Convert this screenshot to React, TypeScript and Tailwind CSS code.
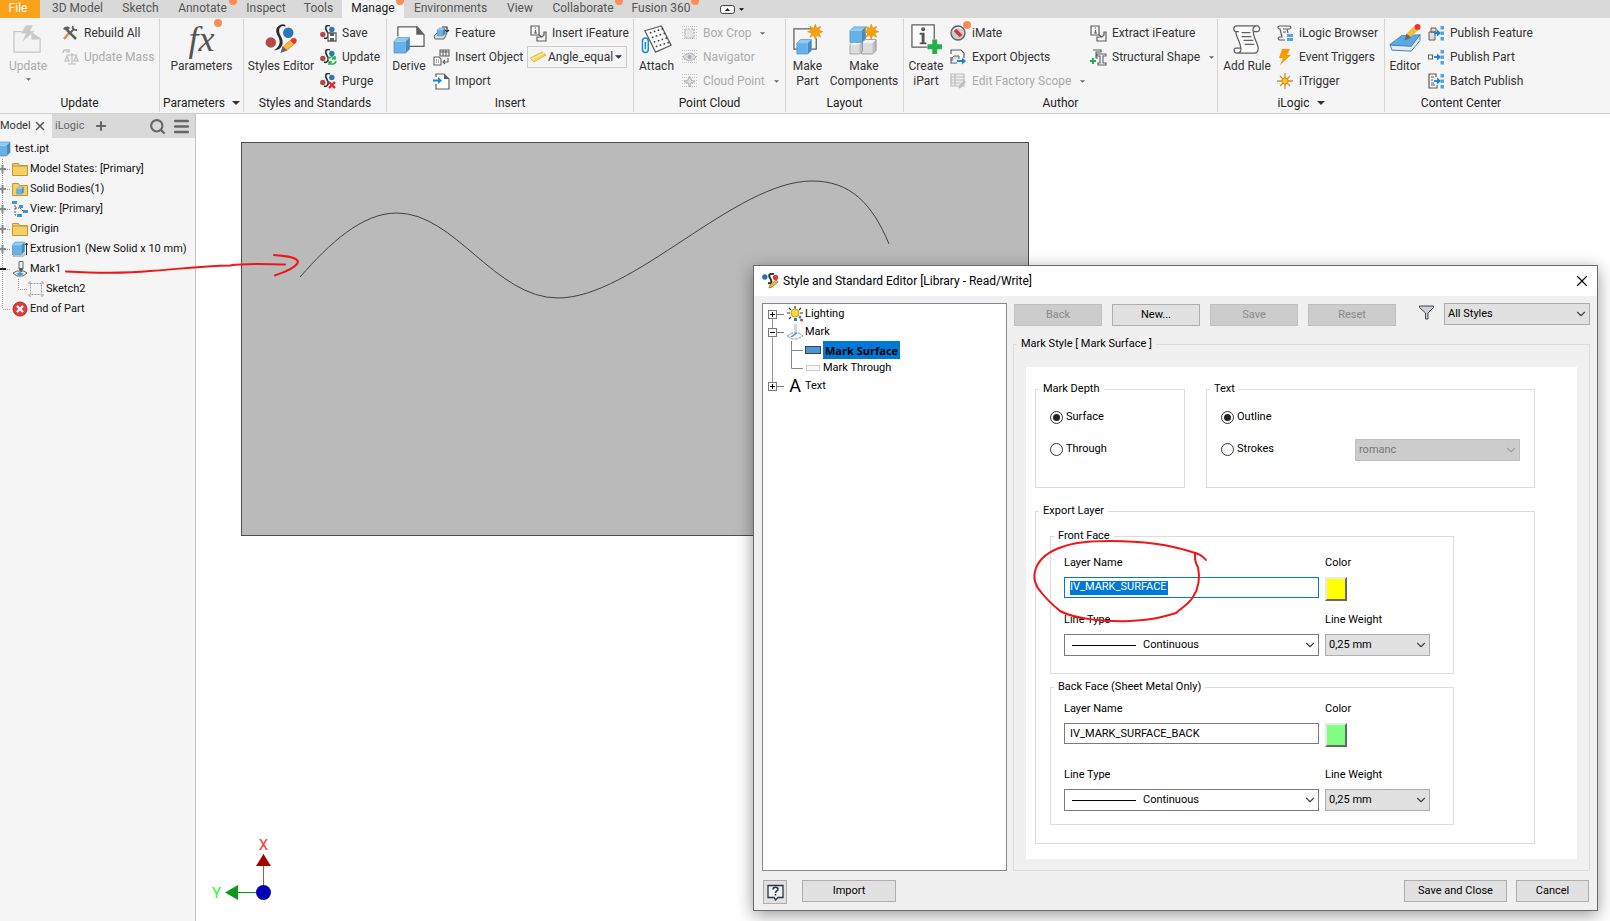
import React, { useState } from 'react';
import clsx from 'clsx';
import { ChevronDown, Menu, Plus, Search, X } from 'lucide-react';

const INK = '#5f5f5f';

function Caret({ className }: { className?: string }) {
  return (
    <svg viewBox="0 0 8 4" className={clsx('shrink-0', className)}>
      <path d="M0 0h8L4 4z" fill="currentColor" />
    </svg>
  );
}

function Cube({ x = 0, y = 0, s = 16, gray = false }: { x?: number; y?: number; s?: number; gray?: boolean }) {
  return (
    <g transform={`translate(${x} ${y}) scale(${s / 16})`}>
      <path d="M0 4h12v12H0z" fill={gray ? '#dcdcdc' : '#66b1e8'} />
      <path d="M0 4 4 0h12l-4 4z" fill={gray ? '#f4f4f4' : '#8ccbf7'} />
      <path d="M12 4 16 0v12l-4 4z" fill={gray ? '#bdbdbd' : '#4389c2'} />
      <path d="M0 4 4 0h12v12l-4 4H0z" fill="none" stroke={gray ? '#777' : '#4a90c8'} strokeWidth=".7" />
    </g>
  );
}

function Burst({ x, y, s = 1 }: { x: number; y: number; s?: number }) {
  return (
    <path
      transform={`translate(${x} ${y}) scale(${s})`}
      d="M0-8 1.5-3.7 5.7-5.7 3.7-1.5 8 0 3.7 1.5 5.7 5.7 1.5 3.7 0 8-1.5 3.7-5.7 5.7-3.7 1.5-8 0-3.7-1.5-5.7-5.7-1.5-3.7z"
      fill="#f7a10a"
      stroke="#d98500"
      strokeWidth=".5"
    />
  );
}

function Pencil() {
  return (
    <g>
      <path d="m17 30 2-6 9-8 4 4-9 8z" fill="#f6b93b" stroke="#c98a1b" strokeWidth=".6" />
      <path d="m16 31 2-7 5 4z" fill="#666" />
      <path d="m26 18 2-2c3-2 6 1 4 4l-2 2z" fill="#ee2f35" />
    </g>
  );
}

// shared "S with two balls" mark, 16x16
function StylesMark() {
  return (
    <g>
      <path d="M10 .8C7-.2 5 1.500 6 4.500c1 3 3 4 2 6.500-.5 2-2 3-4 2" fill="none" stroke="#333" strokeWidth="1.700" />
      <circle cx="2.800" cy="9.500" r="2.700" fill="#b84848" />
      <circle cx="11.800" cy="4.500" r="2.700" fill="#2a78b8" />
    </g>
  );
}

const bigIcons: Record<string, React.ReactNode> = {
  update: (
    <g>
      <path d="M2 9h16l11 7v14H2z" fill="#f3f3f3" stroke="#c6c6c6" strokeWidth="1.300" />
      <path d="M20 9v8h9z" fill="#c9c9c9" />
      <path d="M14 2h8l-3 6h5L10 20l4-9H9z" fill="#c9c9c9" stroke="#f5f5f5" strokeWidth=".6" />
    </g>
  ),
  styles: (
    <g>
      <path d="M21 2c-1.500-.8-3.500-1-5.500 0-5 2.500-4.500 7-2.500 11 2.500 4.500 3 8 .5 11.500-1.500 2-3.500 3-4.500 3.500 4 .5 7-1.500 8.500-4.500 1.500-3.500.5-7-1.500-10.500C14 8.500 14 5 17 3.500c1-.6 2.500-.6 4 .3z" fill="#2d2d2d" />
      <circle cx="6" cy="20" r="5.400" fill="#b84848" />
      <circle cx="24" cy="10" r="5.400" fill="#2a78b8" />
      <Pencil />
    </g>
  ),
  derive: (
    <g>
      <path d="M5 14V4h20l7 8v12H16" fill="#fafafa" stroke={INK} strokeWidth="1.300" />
      <path d="M24 3v9h8z" fill={INK} />
      <Cube x={1} y={15} s={16} />
    </g>
  ),
  attach: (
    <g>
      <path d="M4 8 21 3l10 20-16 7z" fill="#fbfbfb" stroke={INK} strokeWidth="1.300" />
      {[0, 1, 2, 3].map((r) =>
        [0, 1, 2, 3].map((c) => (
          <circle key={`${r}${c}`} cx={10 + c * 4 + r * 2} cy={10 - c * 1.3 + r * 4.7} r=".9" fill="#333" />
        )),
      )}
      <path d="M1.500 27V18.500c0-4 6-4 6 0V27c0 4.500-6 4.500-6 0M4.500 27v-7.500" fill="#f5f5f5" stroke="#1d87dd" strokeWidth="1.500" />
    </g>
  ),
  makePart: (
    <g>
      <path d="M5 27H2V6h19M25 16v11h-5" fill="none" stroke={INK} strokeWidth="1.300" />
      <Cube x={5} y={17} s={15} />
      <Burst x={24} y={9} />
    </g>
  ),
  makeComponents: (
    <g>
      <Cube x={14} y={17} s={15} gray />
      <Cube x={2} y={19} s={13} gray />
      <Cube x={2} y={4} s={16} />
      <Burst x={24} y={9} />
    </g>
  ),
  ipart: (
    <g>
      <path d="M25 17V2H2v23h16" fill="#fafafa" stroke={INK} strokeWidth="1.300" />
      <circle cx="13.500" cy="6.500" r="2" fill="#555" />
      <path d="M10 10h5v10h2v2h-7v-2h2v-8h-2z" fill="#555" />
      <path d="M23 17h5v5h5v5h-5v5h-5v-5h-5v-5h5z" fill="#22b14c" />
    </g>
  ),
  rule: (
    <g fill="none" stroke={INK} strokeWidth="1.300">
      <path d="M6 3h22c3 3 1 6-1 6h-4c0 6 5 13 5 17 0 3-1 5-4 5H6c-3 0-4-5-1-5h5C10 20 5 14 5 9c-3-1-3-6 1-6zM23 9c-1-3 0-5 3-6M5 9h3M10 26c1 3-1 5-3 5" fill="#fafafa" />
      <path d="M11 10h9M11 14h10M13 18h10M14 22h10" />
    </g>
  ),
  editor: (
    <g>
      <path d="m1 22 12-9 19-1-9 13-20 1z" fill="#5aa9e2" stroke="#3a7fb5" strokeWidth=".7" />
      <path d="m1 22 2 6 20 1 9-11v-6l-9 12-20-1z" fill="#e9e9e9" stroke="#3a7fb5" strokeWidth="1" />
      <path d="m17 16 2-6 8-8 5 4-9 8z" fill="#f6b93b" />
      <path d="m16 18 2-7 5 4z" fill="#666" />
      <circle cx="29.500" cy="4" r="3" fill="#ee2f35" />
    </g>
  ),
};

function Publish({ children }: { children: React.ReactNode }) {
  return (
    <g>
      {children}
      <path d="M6 8h5" stroke="#1683dd" strokeWidth="1.800" />
      <path d="m9 4.500 4 3.500-4 3.500z" fill="#1683dd" />
      <path d="M12.500 1h3.500v3.500h-3.500zM12.500 6.500h3.500v3.500h-3.500zM12.500 12h3.500v3.500h-3.500z" fill="#55a6de" />
    </g>
  );
}

function DotGrid({ children }: { children: React.ReactNode }) {
  return (
    <g>
      <path d="M1 1.500h15M1 4.500h15M1 7.500h15M1 10.500h15M1 13.500h15" stroke="#c0c0c0" strokeDasharray="1 1" />
      {children}
    </g>
  );
}

const smallIcons: Record<string, React.ReactNode> = {
  rebuild: (
    <g fill="none">
      <path d="m7 8-5 6" stroke="#e98a4b" strokeWidth="2.500" />
      <path d="m5 5 9 9" stroke={INK} strokeWidth="2.500" />
      <path d="M1 4c2-3 5-3 7-1L5 6z" fill={INK} />
      <path d="m7 9 5-5M11 1c-1 2 0 4 4 4" stroke={INK} strokeWidth="1.800" />
    </g>
  ),
  mass: (
    <g fill="none" stroke="#bcbcbc" strokeWidth="1.200">
      <path d="M10 4v11M6 15h8M5 6h10M3 12l2-5 2 5zM12 12l2-5 2 5zM1 4c0-4 6-4 6-1M7 0v3H4" />
    </g>
  ),
  save: (
    <g>
      <StylesMark />
      <path d="M8 8h8v8H8z" fill="#fff" stroke={INK} strokeWidth="1.300" />
      <path d="M10 8h4v3h-4zM10 13h4v3h-4z" fill={INK} />
    </g>
  ),
  refresh: (
    <g>
      <StylesMark />
      <path d="M8 11c1-4 6-4 7-1m0-3v3h-3M16 12c-1 4-6 4-7 1m0 3v-3h3" fill="none" stroke="#22b14c" strokeWidth="1.500" />
    </g>
  ),
  purge: (
    <g>
      <StylesMark />
      <path d="m9 9 6 6m0-6-6 6" stroke="#f02020" strokeWidth="2.400" />
    </g>
  ),
  feature: (
    <g>
      <path d="m1 11 3-3h10l-3 6H2z" fill="#ddd" stroke={INK} />
      <Cube x={4} y={3} s={8} />
      <path d="M9 2h5v5m-2-2 2 2 2-2" fill="none" stroke="#333" strokeWidth="1.200" />
    </g>
  ),
  object: (
    <g fill="none" stroke={INK} strokeWidth="1.100">
      <path d="M7 1h9v6H7zM7 3h9M10 1v6M13 1v6" />
      <path d="M1 8h5l2 2v6H1z" fill="#fff" />
      <path d="M3 11h1M5 11h1M3 13h1M5 13h1M15 9v4h-5m2-2-2 2 2 2" />
    </g>
  ),
  import: (
    <g>
      <path d="M3 4V1h8l5 5v10H3v-5" fill="#fff" stroke={INK} strokeWidth="1.200" />
      <path d="M11 1v5h5z" fill={INK} />
      <path d="M0 7.500h6" stroke="#1683dd" strokeWidth="2" />
      <path d="m5 4 4 3.500L5 11z" fill="#1683dd" />
    </g>
  ),
  ifeature: (
    <g fill="none" stroke={INK} strokeWidth="1.200">
      <path d="M1 1h8v9H1zM4 8h3M5.500 5v3M5 3h1" />
      <path d="M14 7h2v9H7v-4h5l2-2zM9 10l3 2" />
    </g>
  ),
  box: (
    <DotGrid>
      <path d="M4 4h9v9H4z" fill="#e6e6e6" stroke="#b5b5b5" strokeDasharray="2 1" />
    </DotGrid>
  ),
  navigator: (
    <DotGrid>
      <path d="M2 8c4-5 9-5 13 0-4 5-9 5-13 0z" fill="#ddd" stroke="#b5b5b5" />
      <circle cx="8.500" cy="8" r="2" fill="#aaa" />
    </DotGrid>
  ),
  cloud: (
    <DotGrid>
      <path d="m8.500 3 1.500 4 4 1.500-4 1.500-1.500 4L7 10 3 8.500 7 7z" fill="#ddd" stroke="#b5b5b5" />
    </DotGrid>
  ),
  imate: (
    <g>
      <circle cx="8" cy="8" r="7" fill="#ccc" stroke={INK} strokeWidth="1.300" />
      <path d="m5 5 6 6" stroke="#c43c3c" strokeWidth="3.500" />
      <path d="M3 6c2-4 7-4 9-2" stroke="#fff" fill="none" />
    </g>
  ),
  export: (
    <g>
      <path d="M1 5V1h10l3 3v5M1 8v6h6" fill="none" stroke={INK} strokeWidth="1.200" />
      <path d="M2 12V9l2-2h5v3" fill="#ddd" stroke={INK} />
      <path d="M7 12h6" stroke="#1683dd" strokeWidth="2" />
      <path d="m12 8.500 4 3.500-4 3.500z" fill="#1683dd" />
    </g>
  ),
  factory: (
    <g fill="none" stroke="#bcbcbc" strokeWidth="1.200">
      <path d="M1 1h13v12H1zM1 4h13M1 7h13M1 10h13M5 1v12" fill="#eee" />
      <path d="m9 15 6-7" strokeWidth="2.500" />
    </g>
  ),
  shape: (
    <g fill="none" stroke={INK} strokeWidth="1.100">
      <path d="M3 1h8v2H6v6h2M7 5h9v2h-3v7h3v2H8v-2h2V7H7z" />
      <path d="M3 9v6M0 12h6" stroke="#22b14c" strokeWidth="2" />
    </g>
  ),
  ilogic: (
    <g>
      <path d="M2 1h11c2 2 0 3-1 3h-2l1 4M2 1C0 2 1 4 3 4l2 8H2c-1 1-1 3 1 3h5M6 4h3M6 7h3" fill="none" stroke={INK} strokeWidth="1.200" />
      <path d="M10 9h6v3h-6zM10 13h6v3h-6z" fill="#55a6de" />
    </g>
  ),
  event: <path d="M5 0h8l-3 6h4L3 16l3-7H2z" fill="#f90" />,
  itrigger: (
    <g>
      <path d="M8 0v16M0 8h16M3 3l10 10M13 3 3 13" stroke="#c99243" strokeWidth="1.300" />
      <circle cx="8" cy="8" r="3.200" fill="#fbc31b" stroke="#d58b12" />
    </g>
  ),
  pubFeature: (
    <Publish>
      <path d="M1 7h6v8H1zM3 3h5v4H3z" fill="#ddd" stroke={INK} />
    </Publish>
  ),
  pubPart: (
    <Publish>
      <path d="M.5 6h4v4h-4z" fill="#fff" stroke={INK} strokeWidth="1.200" />
    </Publish>
  ),
  pubBatch: (
    <Publish>
      <path d="M8 4V1H1v14h8v-3M3 4h3M3 7h2M3 10h3M3 12h4" fill="none" stroke={INK} strokeWidth="1.200" />
    </Publish>
  ),
};

function SmallIcon({ name }: { name: string }) {
  return (
    <svg viewBox="0 0 17 17" className="h-[17px] w-[17px] shrink-0">
      {smallIcons[name]}
    </svg>
  );
}

interface SmallProps {
  icon: string;
  label: string;
  disabled?: boolean;
  arrow?: boolean;
  dot?: boolean;
}

function Small({ icon, label, disabled, arrow, dot }: SmallProps) {
  return (
    <button
      disabled={disabled}
      className={clsx('relative flex h-6 items-center gap-[5px] whitespace-nowrap', disabled ? 'text-[#ababab]' : 'text-[#333]')}
    >
      <SmallIcon name={icon} />
      {label}
      {arrow && <Caret className="ml-1 h-[3px] w-[5px] text-[#666]" />}
      {dot && <span className="absolute left-[13px] top-0 h-2 w-2 rounded-full bg-[#ff8c57]" />}
    </button>
  );
}

interface BigProps {
  icon?: string;
  lines: string[];
  className: string;
  disabled?: boolean;
}

function Big({ icon, lines, className, disabled }: BigProps) {
  return (
    <button
      disabled={disabled}
      className={clsx('flex shrink-0 flex-col items-center pt-0.5', disabled ? 'text-[#ababab]' : 'text-[#333]', className)}
    >
      {icon ? (
        <svg viewBox="0 0 33 33" className="h-8 w-8">{bigIcons[icon]}</svg>
      ) : (
        <span className="relative h-8 w-10 whitespace-nowrap font-['Liberation_Serif',serif] text-[36px] italic leading-8 text-[#555]">
          fx
          <span className="absolute -top-1 right-0 h-2 w-2 rounded-full bg-[#ff8c57]" />
        </span>
      )}
      <span className="mt-1 whitespace-nowrap leading-[15px]">
        {lines.map((l) => (
          <span key={l} className="block">{l}</span>
        ))}
      </span>
      {disabled && <Caret className="mt-1 h-[3px] w-[5px] text-[#666]" />}
    </button>
  );
}

function Panel({ title, arrow, className, children }: { title: string; arrow?: boolean; className: string; children: React.ReactNode }) {
  return (
    <section className={clsx('my-px flex shrink-0 flex-col pt-0.5', className)}>
      <div className="flex h-[72px]">{children}</div>
      <h2 className="flex h-[19px] items-center justify-center gap-[7px] text-[#222]">
        {title}
        {arrow && <Caret className="h-1 w-2 text-[#333]" />}
      </h2>
    </section>
  );
}

const tabs = [
  { name: '3D Model', w: 'w-[71px]' },
  { name: 'Sketch', w: 'w-[55px]' },
  { name: 'Annotate', w: 'w-[69px]', dot: true },
  { name: 'Inspect', w: 'w-[58px]' },
  { name: 'Tools', w: 'w-[47px]' },
  { name: 'Manage', w: 'w-[62px]', dot: true },
  { name: 'Environments', w: 'w-[93px]' },
  { name: 'View', w: 'w-[46px]' },
  { name: 'Collaborate', w: 'w-[80px]', dot: true },
  { name: 'Fusion 360', w: 'w-[76px]', dot: true },
];

function Ribbon() {
  const divider = 'border-r border-[#d4d4d4]';
  return (
    <header className="border-b border-[#d0d0d0] bg-[#f5f5f5] text-[12px]">
      <nav className="flex h-[18px] bg-[#d9d9d9] leading-[16px] text-[#555]">
        <button className="mr-0.5 w-10 bg-[#faa21b] pb-0.5 pr-1 text-white">File</button>
        {tabs.map((t) => (
          <button
            key={t.name}
            className={clsx('relative shrink-0 whitespace-nowrap pb-0.5', t.w, t.name === 'Manage' && 'bg-[#f5f5f5] text-[#222]')}
          >
            {t.name}
            {t.dot && <span className="absolute -top-[3px] right-0 h-2 w-2 rounded-full bg-[#ff8c57]" />}
          </button>
        ))}
        <button aria-label="Ribbon display" className="ml-[21px] flex items-center gap-1 text-black">
          <svg viewBox="0 0 15 9" className="h-[9px] w-[15px]">
            <rect x=".6" y=".6" width="13.800" height="7.800" rx="2" fill="#fff" stroke="#333" />
            <path d="M5 6h5L7.500 3z" fill="#222" />
          </svg>
          <Caret className="h-[3px] w-[5px]" />
        </button>
      </nav>

      <div className="flex h-[95px]">
        <Panel title="Update" className={clsx('w-[160px]', divider)}>
          <Big icon="update" lines={['Update']} className="w-14" disabled />
          <div className="ml-1.5">
            <Small icon="rebuild" label="Rebuild All" />
            <Small icon="mass" label="Update Mass" disabled />
          </div>
        </Panel>
        <Panel title="Parameters" arrow className={clsx('w-[84px]', divider)}>
          <Big lines={['Parameters']} className="w-[83px]" />
        </Panel>
        <Panel title="Styles and Standards" className={clsx('w-[143px]', divider)}>
          <Big icon="styles" lines={['Styles Editor']} className="w-[74px]" />
          <div className="ml-0.5">
            <Small icon="save" label="Save" />
            <Small icon="refresh" label="Update" />
            <Small icon="purge" label="Purge" />
          </div>
        </Panel>
        <Panel title="Insert" className={clsx('w-[247px]', divider)}>
          <Big icon="derive" lines={['Derive']} className="w-11" />
          <div className="ml-0.5 w-[94px]">
            <Small icon="feature" label="Feature" />
            <Small icon="object" label="Insert Object" />
            <Small icon="import" label="Import" />
          </div>
          <div>
            <div className="pl-[3px]">
              <Small icon="ifeature" label="Insert iFeature" />
            </div>
            <button className="mt-px flex h-[22px] w-[100px] items-center border border-[#cdcdcd] pl-0.5 text-[#333]">
              <svg viewBox="0 0 16 12" className="h-3 w-4 shrink-0">
                <path d="m0 7 12-6 4 3L4 11z" fill="#f9d75c" stroke="#c8a02a" strokeWidth=".6" />
                <path d="m2 8 12-6" stroke="#fff3b0" />
              </svg>
              <span className="ml-0.5 whitespace-nowrap">Angle_equal</span>
              <Caret className="ml-auto mr-1 h-1 w-[7px]" />
            </button>
          </div>
        </Panel>
        <Panel title="Point Cloud" className={clsx('w-[152px]', divider)}>
          <Big icon="attach" lines={['Attach']} className="w-[45px]" />
          <div className="ml-0.5">
            <Small icon="box" label="Box Crop" disabled arrow />
            <Small icon="navigator" label="Navigator" disabled />
            <Small icon="cloud" label="Cloud Point" disabled arrow />
          </div>
        </Panel>
        <Panel title="Layout" className={clsx('w-[118px]', divider)}>
          <Big icon="makePart" lines={['Make', 'Part']} className="w-[43px]" />
          <Big icon="makeComponents" lines={['Make', 'Components']} className="w-[70px]" />
        </Panel>
        <Panel title="Author" className={clsx('w-[314px]', divider)}>
          <Big icon="ipart" lines={['Create', 'iPart']} className="w-11" />
          <div className="ml-0.5 w-[140px]">
            <Small icon="imate" label="iMate" dot />
            <Small icon="export" label="Export Objects" />
            <Small icon="factory" label="Edit Factory Scope" disabled arrow />
          </div>
          <div>
            <Small icon="ifeature" label="Extract iFeature" />
            <Small icon="shape" label="Structural Shape" arrow />
          </div>
        </Panel>
        <Panel title="iLogic" arrow className={clsx('w-[167px]', divider)}>
          <Big icon="rule" lines={['Add Rule']} className="w-[58px]" />
          <div className="ml-px">
            <Small icon="ilogic" label="iLogic Browser" />
            <Small icon="event" label="Event Triggers" />
            <Small icon="itrigger" label="iTrigger" />
          </div>
        </Panel>
        <Panel title="Content Center" className="w-[152px]">
          <Big icon="editor" lines={['Editor']} className="w-10" />
          <div className="ml-[3px]">
            <Small icon="pubFeature" label="Publish Feature" />
            <Small icon="pubPart" label="Publish Part" />
            <Small icon="pubBatch" label="Batch Publish" />
          </div>
        </Panel>
      </div>
    </header>
  );
}

const treeIcons: Record<string, React.ReactNode> = {
  part: <Cube x={-4} y={1} s={14} />,
  folder: <path d="M.5 2.500h6l1 2h8v10H.5zM.5 5h15" fill="#f6cf65" stroke="#bd9638" />,
  solid: (
    <g>
      <path d="M.5 2.500h6l1 2h8v10H.5z" fill="#f6cf65" stroke="#bd9638" />
      <Cube x={4.500} y={6} s={7} />
    </g>
  ),
  view: (
    <g>
      <path d="M3 4v10h4M3 7h4M8 7l3 3" fill="none" stroke="#555" strokeDasharray="2 1" />
      <path d="M0 0h5v3H0zM7 4h4v3H7zM11 9h5v3h-5zM5 13h5v3H5z" fill="#3f96dc" />
    </g>
  ),
  extrusion: (
    <g>
      <path d="M1 14h9l3-2v2l-3 2H1z" fill="#ccc" stroke="#999" strokeWidth=".5" />
      <Cube x={0} y={1} s={12.500} />
      <path d="M14.500 14V2m-1.500 2 1.500-2L16 4" fill="none" stroke="#333" />
    </g>
  ),
  mark: (
    <g>
      <path d="m1 12 4-2h7l3 2-4 3H5z" fill="#e4eef7" stroke="#555" strokeWidth=".9" />
      <path d="m4 13 4-2 4 2-4 1.500z" fill="#3f96dc" />
      <path d="M7 .5h4v7l-2 3.500-2-3.500z" fill="#eee" stroke="#666" />
      <path d="M7 7h4l-2 4z" fill="#555" />
    </g>
  ),
  sketch: (
    <g fill="none" stroke="#9a9a9a">
      <path d="M2.500 2.500h11v11h-11z" strokeDasharray="2 1" />
      <path d="M0 2h2V0M14 0v2h2M0 14h2v2M14 16v-2h2" />
    </g>
  ),
  end: (
    <g>
      <circle cx="8" cy="8" r="7" fill="#e23b3b" stroke="#c12525" />
      <path d="m5 5 6 6m0-6-6 6" stroke="#fff" strokeWidth="2.200" />
    </g>
  ),
};

const nodes = [
  { icon: 'folder', label: 'Model States: [Primary]', mark: '+' },
  { icon: 'solid', label: 'Solid Bodies(1)', mark: '+' },
  { icon: 'view', label: 'View: [Primary]', mark: '+' },
  { icon: 'folder', label: 'Origin', mark: '+' },
  { icon: 'extrusion', label: 'Extrusion1 (New Solid x 10 mm)', mark: '+' },
  { icon: 'mark', label: 'Mark1', mark: '-' },
  { icon: 'sketch', label: 'Sketch2', mark: '' },
  { icon: 'end', label: 'End of Part', mark: 'end' },
];

function TreeIcon({ name }: { name: string }) {
  return (
    <svg viewBox="0 0 16 16" className="h-4 w-4 shrink-0">
      {treeIcons[name]}
    </svg>
  );
}

function ModelBrowser() {
  return (
    <aside className="w-[196px] shrink-0 border-r border-[#c4c4c4] bg-[#f5f5f5]">
      <div className="flex h-6 items-center bg-[#d9d9d9] text-[#666]">
        <div className="flex h-6 w-[52px] items-center justify-between bg-[#f5f5f5] pr-[5px] text-[#333]">
          <button className="whitespace-nowrap">Model</button>
          <button aria-label="Close panel" className="shrink-0"><X size={14} strokeWidth={2.5} color="#555" /></button>
        </div>
        <button className="ml-[3px]">iLogic</button>
        <button aria-label="Add panel" className="ml-2.5"><Plus size={14} strokeWidth={3.5} /></button>
        <button aria-label="Search" className="ml-auto"><Search size={17} strokeWidth={3} /></button>
        <button aria-label="Panel menu" className="ml-1.5 mr-1"><Menu size={19} strokeWidth={3} /></button>
      </div>
      <ul className="pt-px text-[#111]">
        <li className="flex h-5 items-center">
          <span className="mr-1 w-[11px] overflow-hidden"><TreeIcon name="part" /></span>
          test.ipt
        </li>
        {nodes.map((n) => (
          <li key={n.label} className="flex h-5 items-center whitespace-nowrap">
            <svg viewBox="0 0 12 20" className="h-5 w-3 shrink-0">
              <path d={n.mark === 'end' ? 'M2.500 0v10' : 'M2.500 0v20'} stroke="#999" strokeDasharray="1 1" />
              {n.mark !== '' && <path d="M3 10.500h8" stroke="#999" strokeDasharray="1 1" />}
              {n.mark === '+' && <path d="M-2 10h8M2.500 6v8" stroke="#8a8a8a" strokeWidth="2" />}
              {n.mark === '-' && <path d="M-2 10h8" stroke="#222" strokeWidth="2" />}
            </svg>
            {n.mark === '' && (
              <svg viewBox="0 0 16 20" className="h-5 w-4 shrink-0">
                <path d="M6.500 0v10.500H15" fill="none" stroke="#999" strokeDasharray="1 1" />
              </svg>
            )}
            <TreeIcon name={n.icon} />
            <span className="ml-0.5">{n.label}</span>
          </li>
        ))}
      </ul>
    </aside>
  );
}

function Viewport() {
  return (
    <svg className="absolute inset-0 h-full w-full" aria-label="Model view">
      <rect x="45.500" y="28.500" width="787" height="393" fill="#bababa" stroke="#4d4d4d" />
      <path
        d="M104 163C134 129 166 99 201 99C259 99 299 184 362 184C437 184 539 67 616 67C654 67 676 89 693 130"
        fill="none"
        stroke="#404040"
      />
      <path d="M67.500 740v34" stroke="#c05050" />
      <path d="M67.500 740 75 752H60z" fill="#a80000" />
      <path d="M41 778.500h24" stroke="#0a9a1a" />
      <path d="M29 778.500 42 771v15z" fill="#0a9a1a" />
      <circle cx="67.500" cy="778.500" r="7.500" fill="#0000b4" />
      <text x="67.500" y="736" textAnchor="middle" fontSize="15" fill="#f33">X</text>
      <text x="20.500" y="784" textAnchor="middle" fontSize="15" fill="#2f2">Y</text>
    </svg>
  );
}

interface GroupProps {
  title: string;
  className?: string;
  bodyClass?: string;
  children: React.ReactNode;
}

function Group({ title, className, bodyClass, children }: GroupProps) {
  return (
    <fieldset className={clsx('min-w-0 border border-[#dcdcdc]', className)}>
      <legend className="ml-[3px] px-1 leading-[14px]">{title}</legend>
      <div className={bodyClass}>{children}</div>
    </fieldset>
  );
}

function DialogButton({ className, disabled, children }: { className: string; disabled?: boolean; children: React.ReactNode }) {
  return (
    <button
      disabled={disabled}
      className={clsx(
        'h-[22px] shrink-0 border',
        disabled ? 'border-[#bfbfbf] bg-[#cccccc] text-[#8a8a8a]' : 'border-[#adadad] bg-[#e1e1e1]',
        className,
      )}
    >
      {children}
    </button>
  );
}

interface PickProps {
  id: string;
  value: string;
  className: string;
  selectClass: string;
  disabled?: boolean;
  line?: boolean;
}

function Pick({ id, value, className, selectClass, disabled, line }: PickProps) {
  return (
    <div className={clsx('relative h-[22px]', className)}>
      <select id={id} aria-label={id} disabled={disabled} className={clsx('h-full w-full appearance-none border opacity-100', selectClass)}>
        <option>{value}</option>
      </select>
      {line && <span className="pointer-events-none absolute left-2 top-[11px] h-px w-16 bg-black" />}
      <ChevronDown size={14} strokeWidth={2} className={clsx('pointer-events-none absolute right-0.5 top-1', disabled ? 'text-[#a0a0a0]' : 'text-[#444]')} />
    </div>
  );
}

function Radio({ name, label, checked, onChange }: { name: string; label: string; checked: boolean; onChange: () => void }) {
  return (
    <label className="flex h-8 items-center gap-[3px]">
      <input
        type="radio"
        name={name}
        checked={checked}
        onChange={onChange}
        className="h-[13px] w-[13px] appearance-none rounded-full border border-[#333] bg-white bg-clip-content p-0.5 checked:bg-[#222]"
      />
      {label}
    </label>
  );
}

interface FaceProps {
  id: string;
  name: string;
  swatch: string;
  selected?: boolean;
  rowClass: string;
}

function Face({ id, name, swatch, selected, rowClass }: FaceProps) {
  const [value, setValue] = useState(name);
  return (
    <div className="grid grid-cols-[255px_105px] gap-x-1.5 pl-[13px]">
      <label htmlFor={`${id}-name`} className="leading-[14px]">Layer Name</label>
      <span className="leading-[14px]">Color</span>
      {selected ? (
        <div className="mt-[7px] flex h-[21px] items-center border border-[#0078d7] bg-white pl-[5px]">
          <input
            id={`${id}-name`}
            value={value}
            size={14}
            onChange={(e) => setValue(e.target.value)}
            className="h-[14px] w-[98px] bg-[#0078d7] text-white outline-none"
          />
        </div>
      ) : (
        <input
          id={`${id}-name`}
          value={value}
          onChange={(e) => setValue(e.target.value)}
          className="mt-[7px] h-[21px] border border-[#7a7a7a] bg-white pl-[5px]"
        />
      )}
      <button
        aria-label="Layer color"
        className={clsx('mt-[7px] h-6 w-[22px] border-2 border-b-[#696969] border-l-[#e8e8e8] border-r-[#696969] border-t-[#e8e8e8]', swatch)}
      />
      <label htmlFor={`${id}-type`} className={clsx('leading-[14px]', rowClass)}>Line Type</label>
      <label htmlFor={`${id}-weight`} className={clsx('leading-[14px]', rowClass)}>Line Weight</label>
      <Pick id={`${id}-type`} value="Continuous" line className="mt-[7px]" selectClass="border-[#7a7a7a] bg-white pl-[78px]" />
      <Pick id={`${id}-weight`} value="0,25 mm" className="mt-[7px]" selectClass="border-[#adadad] bg-[#e1e1e1] pl-[3px]" />
    </div>
  );
}

function Expander({ open, spine }: { open?: boolean; spine: string }) {
  return (
    <svg viewBox="0 0 19 18" className="h-[18px] w-[19px] shrink-0">
      <path d={spine} stroke="#999" />
      <path d="M9 9.500h7" stroke="#777" />
      <rect x=".5" y="5.500" width="8" height="8" fill="#fff" stroke="#777" />
      <path d={open ? 'M2 9.500h5' : 'M2 9.500h5M4.500 7v5'} stroke="#000" />
    </svg>
  );
}

function StyleTree() {
  return (
    <ul className="w-[245px] shrink-0 border border-[#828790] bg-white pl-[5px] pt-px">
      <li className="flex h-[18px] items-center">
        <Expander spine="M4.500 9v9" />
        <svg viewBox="0 0 16 16" className="mr-0.5 h-4 w-4 shrink-0">
          <path d="M8 0v3M2 2l2 2M14 2l-2 2M0 7h3M13 7h3M2 13l2-2" stroke="#333" strokeWidth="1.200" />
          <circle cx="8" cy="7" r="4" fill="#ffd83a" stroke="#c79a12" />
          <path d="M7 12h3v3H7z" fill="#2a78b8" />
          <circle cx="13" cy="11" r="1.500" fill="#3d8bd0" />
          <circle cx="14.500" cy="14" r="1.500" fill="#d43a3a" />
        </svg>
        Lighting
      </li>
      <li>
        <div className="flex h-[18px] items-center">
          <Expander open spine="M4.500 0v18" />
          <svg viewBox="0 0 16 16" className="mr-0.5 h-4 w-4 shrink-0">
            <path d="M7 0h3v9H7z" fill="#d6d6d6" />
            <path d="m0 12 5-3h7l4 3-6 3H5z" fill="#eef5fb" stroke="#999" strokeDasharray="3 1" />
            <path d="m4 13 6-4" stroke="#3f96dc" strokeWidth="1.500" />
          </svg>
          Mark
        </div>
        <ul className="ml-1 border-l border-[#999] pl-[18px]">
          <li className="flex h-[18px] items-center">
            <svg viewBox="0 0 32 18" className="h-[18px] w-8 shrink-0">
              <path d="M.5 0v18M1 9.500h11" stroke="#888" />
              <rect x="14.500" y="5.500" width="15" height="7" fill="#4a96d8" stroke="#345" />
            </svg>
            <button className="h-[18px] bg-[#0078d7] px-0.5 font-['Open_Sans',sans-serif] font-bold leading-[17px]">Mark Surface</button>
          </li>
          <li className="flex h-[18px] items-center">
            <svg viewBox="0 0 32 18" className="h-[18px] w-8 shrink-0">
              <path d="M.5 0v9.500H12" fill="none" stroke="#888" />
              <rect x="15.500" y="6.500" width="13" height="5" fill="#fafafa" stroke="#ccc" />
            </svg>
            <button>Mark Through</button>
          </li>
        </ul>
      </li>
      <li className="flex h-[18px] items-center">
        <Expander spine="M4.500 0v9" />
        <span className="mr-0.5 w-4 text-center text-[18px] leading-[18px]">A</span>
        Text
      </li>
    </ul>
  );
}

function StyleEditor() {
  const [depth, setDepth] = useState('Surface');
  const [text, setText] = useState('Outline');
  return (
    <div
      role="dialog"
      aria-label="Style and Standard Editor"
      className="absolute left-[753px] right-3 top-[265px] border border-[#6a6a6a] bg-[#f0f0f0] shadow-[0_4px_16px_rgba(0,0,0,0.4)]"
    >
      <div className="flex h-[30px] items-center bg-white pl-2 pr-1.5 text-[12px]">
        <svg viewBox="0 0 17 17" className="mr-1 h-[17px] w-[17px]">
          <path d="M12 1C8 0 6 2 8 5s2 6-2 5" fill="none" stroke="#333" strokeWidth="2" />
          <circle cx="2.800" cy="4" r="2.700" fill="#2a6fb0" />
          <circle cx="13.500" cy="4.500" r="2.700" fill="#d83c3c" />
          <path d="m7 15 1-3 6-5 2 2-6 5z" fill="#f6b93b" stroke="#8a5a14" strokeWidth=".7" />
        </svg>
        <h1>Style and Standard Editor [Library - Read/Write]</h1>
        <button aria-label="Close" className="ml-auto"><X size={18} strokeWidth={1.500} /></button>
      </div>

      <div className="flex gap-1.5 pb-[9px] pl-2 pr-[7px] pt-[7px]">
        <StyleTree />
        <div className="min-w-0 flex-1">
          <div className="flex items-start gap-2.5 pl-px">
            <DialogButton className="mt-px w-[88px]" disabled>Back</DialogButton>
            <DialogButton className="mt-px w-[88px]">New...</DialogButton>
            <DialogButton className="mt-px w-[88px]" disabled>Save</DialogButton>
            <DialogButton className="mt-px w-[88px]" disabled>Reset</DialogButton>
            <svg viewBox="0 0 15 15" className="ml-auto mt-0.5 h-[15px] w-[15px] shrink-0">
              <path d="M.5 1h14v1.500L9 8v6H6.500V8L.5 2.500z" fill="#c9d2da" stroke="#444" />
            </svg>
            <Pick id="Style filter" value="All Styles" className="w-[146px]" selectClass="border-[#adadad] bg-[#e1e1e1] pl-[3px]" />
          </div>

          <Group title="Mark Style [ Mark Surface ]" className="mt-[11px]" bodyClass="pb-[11px] pl-3 pr-3">
            <div className="mt-4 bg-white pb-[15px] pl-[9px] pr-[42px] pt-[15px]">
              <div className="flex gap-[21px]">
                <Group title="Mark Depth" className="h-[106px] w-[150px]" bodyClass="pl-[14px] pt-[5px]">
                  {['Surface', 'Through'].map((v) => (
                    <Radio key={v} name="depth" label={v} checked={depth === v} onChange={() => setDepth(v)} />
                  ))}
                </Group>
                <Group title="Text" className="h-[106px] flex-1" bodyClass="flex items-end justify-between pl-[14px] pr-[14px] pt-[5px]">
                  <div>
                    {['Outline', 'Strokes'].map((v) => (
                      <Radio key={v} name="text" label={v} checked={text === v} onChange={() => setText(v)} />
                    ))}
                  </div>
                  <Pick id="Stroke font" value="romanc" disabled className="mb-1 w-[165px]" selectClass="border-[#bfbfbf] bg-[#cccccc] text-[#777] pl-[3px]" />
                </Group>
              </div>

              <Group title="Export Layer" className="mt-4" bodyClass="pb-[18px] pl-[14px]">
                <Group title="Front Face" className="mt-[11px] w-[404px]" bodyClass="pb-[17px] pt-[13px]">
                  <Face id="front" name="IV_MARK_SURFACE" swatch="bg-[#ffff00]" selected rowClass="mt-3" />
                </Group>
                <Group title="Back Face (Sheet Metal Only)" className="mt-1.5 w-[404px]" bodyClass="pb-[13px] pt-2">
                  <Face id="back" name="IV_MARK_SURFACE_BACK" swatch="bg-[#80ff80]" rowClass="mt-[21px]" />
                </Group>
              </Group>
            </div>
          </Group>
        </div>
      </div>

      <div className="flex items-start pb-1.5 pl-[9px] pr-2">
        <button aria-label="Help" className="flex h-6 w-6 items-center justify-center border border-[#adadad] bg-[#e1e1e1]">
          <svg viewBox="0 0 17 17" className="h-[17px] w-[17px]">
            <path d="M1 1.500h15v12h-5L8.500 16 7 13.500H1z" fill="#eef0f4" stroke="#2c3440" strokeWidth="1.300" />
            <path d="M6 5.500c0-3 5-3 5 0 0 1.500-2.500 1.500-2.500 3.500M8.500 10v1.500" fill="none" stroke="#2c3440" strokeWidth="1.500" />
          </svg>
        </button>
        <DialogButton className="ml-[15px] w-[94px]">Import</DialogButton>
        <DialogButton className="ml-auto w-[103px]">Save and Close</DialogButton>
        <DialogButton className="ml-[9px] w-[73px]">Cancel</DialogButton>
      </div>
    </div>
  );
}

// freehand red pen notes
function Notes() {
  return (
    <svg className="pointer-events-none absolute inset-0 h-full w-full">
      <g fill="none" stroke="#f01616" strokeWidth="2" strokeLinecap="round" strokeLinejoin="round">
        <path d="M66 271.500C95 273 130 273 150 271C180 269 200 266 230 265.500C245 263 260 264 285 264.500M274 255C283 256 297 256 298 262C296 268 284 272 275 275.500" />
        <path d="M1206 560C1202 555 1197 553 1192 552C1165 543 1135 541 1110 541C1088 541 1072 543 1062 547C1050 551 1040 558 1036 568C1032 578 1036 587 1041 592C1047 600 1054 606 1060 611C1075 619 1105 622 1130 621C1150 620 1160 618 1176 613C1180 609 1189 604 1193 597C1199 588 1200 577 1198 567C1194 561 1195 557 1195 553" />
      </g>
    </svg>
  );
}

export default function App() {
  return (
    <div className="relative flex min-h-screen flex-col overflow-hidden bg-white font-['Roboto',sans-serif] text-[11px] text-black">
      <Ribbon />
      <div className="flex flex-1">
        <ModelBrowser />
        <main className="relative flex-1">
          <Viewport />
        </main>
      </div>
      <StyleEditor />
      <Notes />
    </div>
  );
}
